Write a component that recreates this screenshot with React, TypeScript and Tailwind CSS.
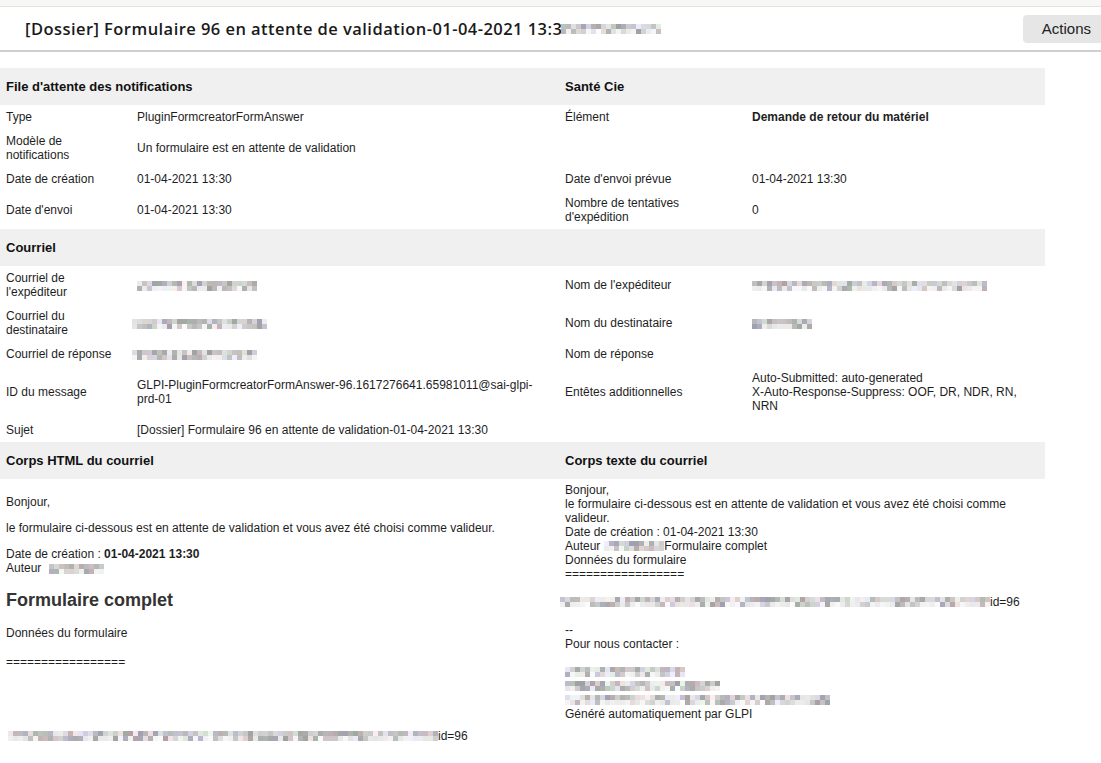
import React from "react";

function rng(seed: number) {
  let s = seed * 9301 + 49297;
  return () => {
    s = (s * 1103515245 + 12345) % 2147483648;
    return s / 2147483648;
  };
}

function Blur({ w, seed = 1, rows = 2, className = "" }: { w: number; seed?: number; rows?: number; className?: string }) {
  const r = rng(seed);
  const cols = Math.max(1, Math.round(w / 5));
  const cells: React.ReactNode[] = [];
  for (let y = 0; y < rows; y++) {
    for (let x = 0; x < cols; x++) {
      const v = 160 + Math.floor(r() * 80);
      const t = r();
      const rr = Math.min(255, v + (t < 0.2 ? 14 : 0));
      const gg = Math.min(255, v + (t > 0.85 ? 10 : 0));
      const bb = Math.min(255, v + (t > 0.4 && t < 0.6 ? 16 : 0));
      const a = y === rows - 1 && r() < 0.35 ? 0.25 : 1;
      cells.push(<span key={`${x}-${y}`} style={{ background: `rgba(${rr},${gg},${bb},${a})` }} />);
    }
  }
  return (
    <span
      className={`inline-grid align-middle ${className}`}
      style={{ gridTemplateColumns: `repeat(${cols},5px)`, gridAutoRows: "5px" }}
    >
      {cells}
    </span>
  );
}

function Head({ children }: { children?: React.ReactNode }) {
  return (
    <div className="col-span-2 flex h-[37px] items-center bg-[#f0f0f0] pl-[6px] text-[13px] font-bold text-[#111]">
      {children}
    </div>
  );
}

function Cell({ children, bold = false, wide = false }: { children?: React.ReactNode; bold?: boolean; wide?: boolean }) {
  return (
    <div className={`flex items-center py-[5px] pl-[6px] ${wide ? "pr-[15px]" : "pr-[5px]"} ${bold ? "font-bold" : ""}`}>
      <div>{children}</div>
    </div>
  );
}

export default function App() {
  return (
    <div className="min-h-[763px] w-[1101px] overflow-hidden bg-white font-['Liberation_Sans',Arial,sans-serif] text-[12px] leading-[14px] text-[#1e1e1e]">
      <div className="h-[7px] border-b border-[#e3e3e3] bg-[#f7f7f5]" />
      <div className="flex h-[45px] w-[1110px] items-center border-b-2 border-[#cfcfcf] pl-[25px]">
        <h1 className="flex items-center font-['Open_Sans',sans-serif] text-[16.5px] font-semibold tracking-[0.45px] text-[#1a1a1a]">
          [Dossier] Formulaire 96 en attente de validation-01-04-2021 13:3
          <Blur w={100} seed={3} className="ml-[-1px]" />
        </h1>
        <button className="ml-auto flex h-[28px] items-center rounded-[4px] bg-[#e6e6e6] px-[19px] font-['Liberation_Sans',Arial,sans-serif] text-[15px] text-[#222]">
          Actions
        </button>
      </div>

      <div className="mt-[16px] grid w-[1045px] grid-cols-[131px_428px_187px_299px]">
        <Head>File d'attente des notifications</Head>
        <Head>Santé Cie</Head>

        <Cell>Type</Cell>
        <Cell>PluginFormcreatorFormAnswer</Cell>
        <Cell>Élément</Cell>
        <Cell bold>Demande de retour du matériel</Cell>

        <Cell>Modèle de notifications</Cell>
        <Cell>Un formulaire est en attente de validation</Cell>
        <Cell />
        <Cell />

        <Cell>Date de création</Cell>
        <Cell>01-04-2021 13:30</Cell>
        <Cell>Date d'envoi prévue</Cell>
        <Cell>01-04-2021 13:30</Cell>

        <Cell>Date d'envoi</Cell>
        <Cell>01-04-2021 13:30</Cell>
        <Cell>Nombre de tentatives d'expédition</Cell>
        <Cell>0</Cell>

        <Head>Courriel</Head>
        <Head />

        <Cell>Courriel de l'expéditeur</Cell>
        <Cell>
          <Blur w={120} seed={11} />
        </Cell>
        <Cell>Nom de l'expéditeur</Cell>
        <Cell>
          <Blur w={235} seed={12} />
        </Cell>

        <Cell>Courriel du destinataire</Cell>
        <Cell>
          <Blur w={135} seed={13} className="ml-[-5px]" />
        </Cell>
        <Cell>Nom du destinataire</Cell>
        <Cell>
          <Blur w={60} seed={14} />
        </Cell>

        <Cell>Courriel de réponse</Cell>
        <Cell>
          <Blur w={125} seed={15} className="ml-[-5px]" />
        </Cell>
        <Cell>Nom de réponse</Cell>
        <Cell />

        <Cell>ID du message</Cell>
        <Cell wide>GLPI-PluginFormcreatorFormAnswer-96.1617276641.65981011@sai-glpi-prd-01</Cell>
        <Cell>Entêtes additionnelles</Cell>
        <Cell>
          Auto-Submitted: auto-generated
          <br />
          X-Auto-Response-Suppress: OOF, DR, NDR, RN, NRN
        </Cell>

        <Cell>Sujet</Cell>
        <Cell>[Dossier] Formulaire 96 en attente de validation-01-04-2021 13:30</Cell>
        <Cell />
        <Cell />

        <Head>Corps HTML du courriel</Head>
        <Head>Corps texte du courriel</Head>

        <div className="col-span-2 pl-[6px] pr-[5px] pt-[5px]">
          <p className="mt-[11px]">Bonjour,</p>
          <p className="mt-[12px]">
            le formulaire ci-dessous est en attente de validation et vous avez été choisi comme valideur.
          </p>
          <p className="mt-[12px]">
            Date de création : <b>01-04-2021 13:30</b>
            <br />
            Auteur <Blur w={55} seed={21} className="ml-[4px]" />
          </p>
          <h2 className="mt-[15px] text-[18px] font-bold leading-[21px] text-[#333]">Formulaire complet</h2>
          <p className="mt-[15px]">Données du formulaire</p>
          <p className="mt-[15px]">=================</p>
          <p className="mt-[60px] flex items-center pl-[2px]">
            <Blur w={430} seed={22} />
            id=96
          </p>
        </div>

        <div className="col-span-2 pl-[6px] pr-[5px] pt-[4px]">
          <div>Bonjour,</div>
          <div>le formulaire ci-dessous est en attente de validation et vous avez été choisi comme valideur.</div>
          <div>Date de création : 01-04-2021 13:30</div>
          <div className="flex items-center">
            Auteur <Blur w={60} seed={31} className="ml-[4px]" />
            Formulaire complet
          </div>
          <div>Données du formulaire</div>
          <div>=================</div>
          <div className="h-[14px]" />
          <div className="ml-[-5px] flex items-center">
            <Blur w={430} seed={32} />
            id=96
          </div>
          <div className="h-[14px]" />
          <div>--</div>
          <div>Pour nous contacter :</div>
          <div className="h-[14px]" />
          <div className="flex h-[14px] items-center">
            <Blur w={120} seed={33} />
          </div>
          <div className="flex h-[14px] items-center">
            <Blur w={155} seed={34} />
          </div>
          <div className="flex h-[14px] items-center">
            <Blur w={265} seed={35} />
          </div>
          <div>Généré automatiquement par GLPI</div>
        </div>
      </div>
    </div>
  );
}
